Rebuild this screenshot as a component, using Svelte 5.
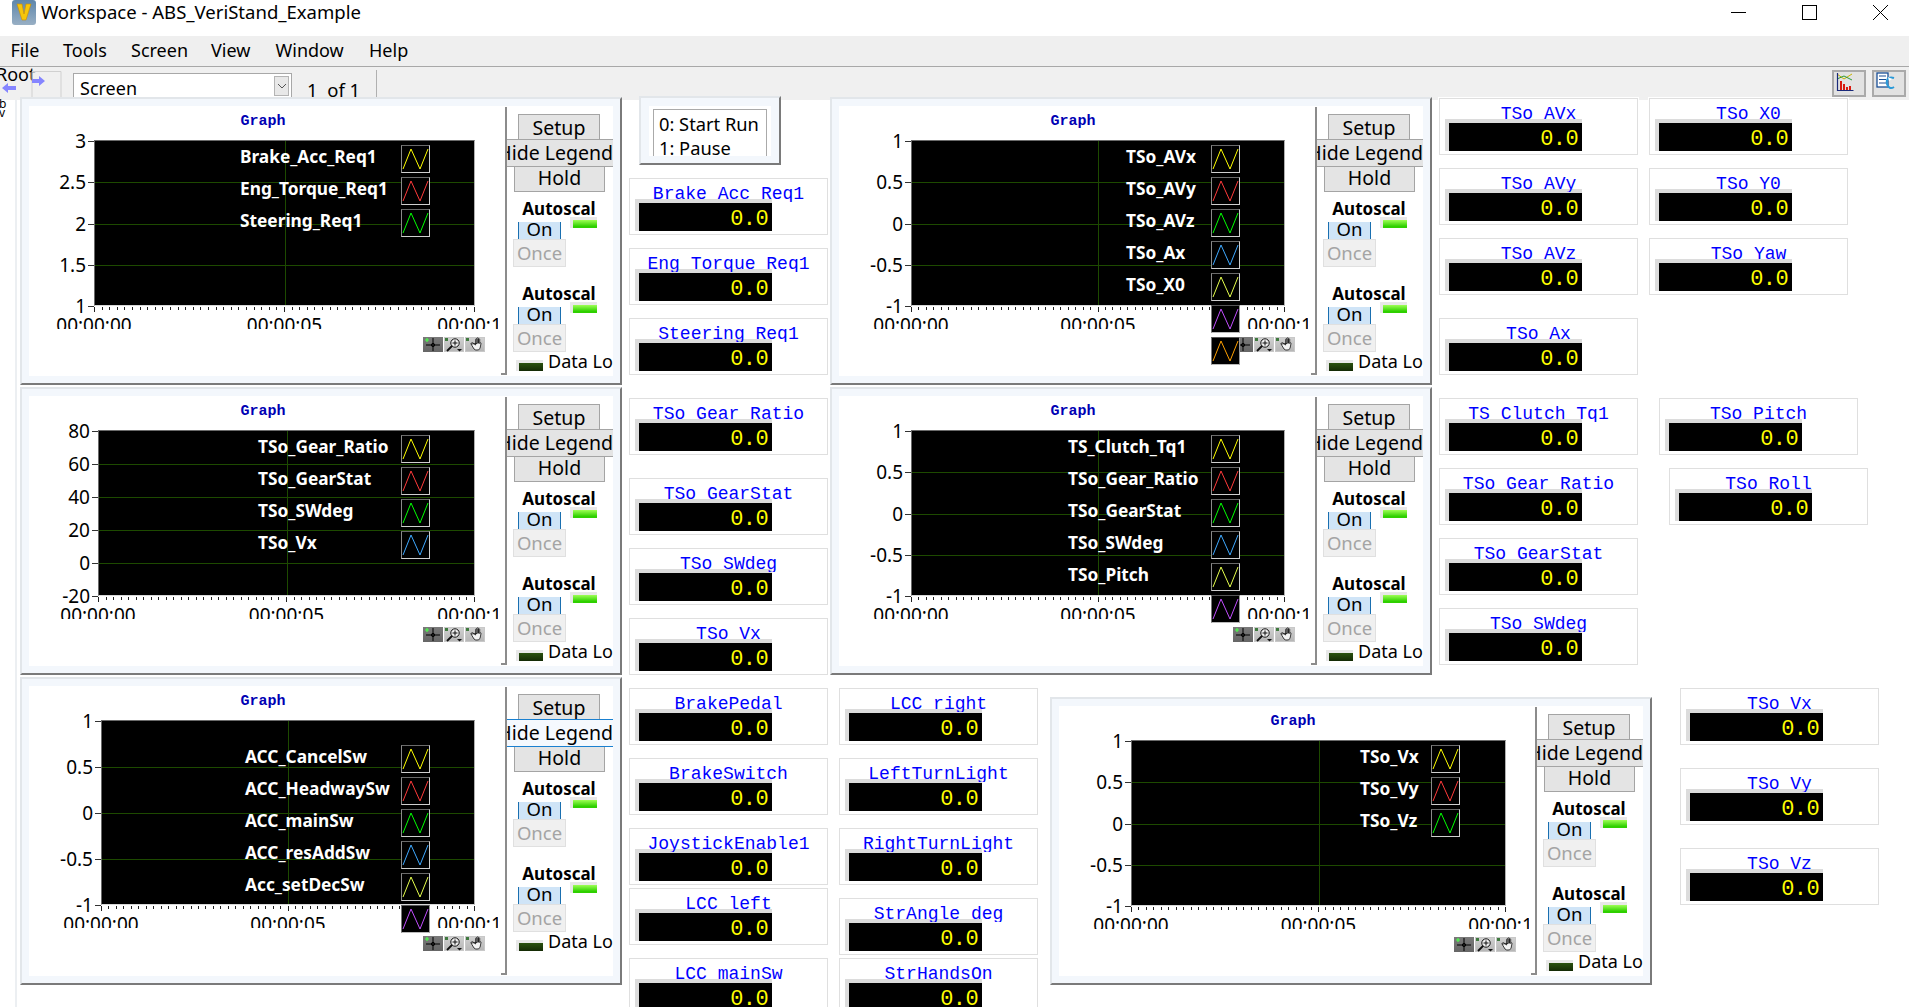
<script>
  const C = { y: '#ffff00', r: '#ff3a3a', g: '#00ff00', b: '#3fa9ff', l: '#e6ff4d', p: '#c24dff', o: '#ffa000' };
  const order = [C.y, C.r, C.g, C.b, C.l, C.p, C.o];
  const graphs = [
    { x: 20, y: 97, left: 65, w: 381, h: 166, ys: ['3','2.5','2','1.5','1'], lx: 211, first: 5, extra: 0, names: ['Brake_Acc_Req1','Eng_Torque_Req1','Steering_Req1'] },
    { x: 20, y: 387, left: 69, w: 377, h: 166, ys: ['80','60','40','20','0','-20'], lx: 229, first: 5, extra: 0, names: ['TSo_Gear_Ratio','TSo_GearStat','TSo_SWdeg','TSo_Vx'] },
    { x: 20, y: 677, left: 72, w: 374, h: 185, ys: ['1','0.5','0','-0.5','-1'], lx: 216, first: 25, extra: 1, active: true, names: ['ACC_CancelSw','ACC_HeadwaySw','ACC_mainSw','ACC_resAddSw','Acc_setDecSw'] },
    { x: 830, y: 97, left: 72, w: 374, h: 166, ys: ['1','0.5','0','-0.5','-1'], lx: 287, first: 5, extra: 2, names: ['TSo_AVx','TSo_AVy','TSo_AVz','TSo_Ax','TSo_X0'] },
    { x: 830, y: 387, left: 72, w: 374, h: 166, ys: ['1','0.5','0','-0.5','-1'], lx: 229, first: 5, extra: 1, names: ['TS_Clutch_Tq1','TSo_Gear_Ratio','TSo_GearStat','TSo_SWdeg','TSo_Pitch'] },
    { x: 1050, y: 697, left: 72, w: 375, h: 166, ys: ['1','0.5','0','-0.5','-1'], lx: 301, first: 5, extra: 0, names: ['TSo_Vx','TSo_Vy','TSo_Vz'] }
  ];
  const ticks = Array.from({ length: 51 }, (_, i) => i);
  const inds = [
    [629,178,'Brake_Acc_Req1'],[629,248,'Eng_Torque_Req1'],[629,318,'Steering_Req1'],[629,398,'TSo_Gear_Ratio'],
    [629,478,'TSo_GearStat'],[629,548,'TSo_SWdeg'],[629,618,'TSo_Vx'],[629,688,'BrakePedal'],[629,758,'BrakeSwitch'],
    [629,828,'JoystickEnable1'],[629,888,'LCC_left'],[629,958,'LCC_mainSw'],
    [839,688,'LCC_right'],[839,758,'LeftTurnLight'],[839,828,'RightTurnLight'],[839,898,'StrAngle_deg'],[839,958,'StrHandsOn'],
    [1439,98,'TSo_AVx'],[1439,168,'TSo_AVy'],[1439,238,'TSo_AVz'],[1439,318,'TSo_Ax'],[1439,398,'TS_Clutch_Tq1'],
    [1439,468,'TSo_Gear_Ratio'],[1439,538,'TSo_GearStat'],[1439,608,'TSo_SWdeg'],
    [1649,98,'TSo_X0'],[1649,168,'TSo_Y0'],[1649,238,'TSo_Yaw'],[1659,398,'TSo_Pitch'],[1669,468,'TSo_Roll'],
    [1680,688,'TSo_Vx'],[1680,768,'TSo_Vy'],[1680,848,'TSo_Vz']
  ];
  const menus = [['File',52.5],['Tools',68],['Screen',80],['View',64.5],['Window',93.5],['Help',60]];
</script>

<div class="shell">
  <header class="title">
    <svg class="appicon" width="24" height="25" viewBox="0 0 24 25">
      <defs><linearGradient id="ag" x1="0" y1="0" x2="0" y2="1"><stop offset="0" stop-color="#5d86ab"/><stop offset="1" stop-color="#98afc4"/></linearGradient></defs>
      <rect x="0" y="0" width="24" height="25" rx="3" fill="url(#ag)"/>
      <path d="M5 4h5l2 10 2-10h5l-5 16h-4z" fill="#f6c60a" stroke="#c98c00" stroke-width=".6"/>
    </svg>
    <span class="ttext">Workspace - ABS_VeriStand_Example</span>
    <div class="winbtns">
      <svg width="15" height="15" viewBox="0 0 15 15"><path d="M0 7.5h15" stroke="#000" stroke-width="1"/></svg>
      <svg width="15" height="15" viewBox="0 0 15 15"><rect x=".5" y=".5" width="14" height="14" fill="none" stroke="#000"/></svg>
      <svg width="15" height="15" viewBox="0 0 15 15"><path d="M0 0l15 15M15 0L0 15" stroke="#000" stroke-width="1"/></svg>
    </div>
  </header>

  <nav class="menu">
    {#each menus as m}
      <span class="mitem" style="width:{m[1]}px">{m[0]}</span>
    {/each}
  </nav>

  <div class="toolbar">
    <div class="nav">
      <span class="root">Root</span>
      <svg class="arrows" width="62" height="30" viewBox="0 0 62 30">
        <path d="M32 0.5H61V30M32 0.5V30" fill="none" stroke="#d0d0d0"/>
        <path d="M2 17l6-5v3h8v4H8v3z" fill="#8585ff"/>
        <path d="M45 10l-6-5v3h-7v4h7v3z" fill="#8585ff"/>
      </svg>
    </div>
    <div class="drop">
      <span>Screen</span>
      <span class="dropbtn"><svg width="10" height="6" viewBox="0 0 10 6"><path d="M1 1l4 4 4-4" fill="none" stroke="#555"/></svg></span>
    </div>
    <span class="pager">1&nbsp;&nbsp;of 1</span>
    <span class="sep"></span>
    <div class="ticons">
      <span class="ticon">
        <svg width="18" height="20" viewBox="0 0 18 20">
          <path d="M1 2l7 5 8-5" fill="none" stroke="#c7b400" stroke-width="1"/>
          <path d="M1 7l7-3 8 4" fill="none" stroke="#2c9a3c" stroke-width="1"/>
          <path d="M1.500 1v17.500h16" fill="none" stroke="#1a2a7a" stroke-width="1.200"/>
          <path d="M4 9h2v9H4zM7 12h2v6H7zM10 15h2v3h-2zM13 14h2v4h-2z" fill="#d81a10"/>
        </svg>
      </span>
      <span class="ticon">
        <svg width="20" height="20" viewBox="0 0 20 20">
          <rect x="1" y="1" width="11" height="14" fill="#fff" stroke="#1a4f96" stroke-width="1.300"/>
          <path d="M3 4h7M3 7.500h7M3 11h7" stroke="#1a4f96" stroke-width="1.100"/>
          <path d="M18 6c-6-2-8 2-7 6s4 5 7 3" fill="none" stroke="#2b9ad8" stroke-width="2"/>
          <path d="M12 5l4 2-3 2z" fill="#fff"/>
        </svg>
      </span>
    </div>
  </div>

  <main class="canvas">
    <div class="edge"></div>
    <div class="stray"><span>b</span><span>v</span></div>

    {#each graphs as g}
      <section class="panel" style="left:{g.x}px;top:{g.y - 100}px">
        <div class="inner" class:tall={g.h > 170}>
          <div class="chart">
            <div class="gtitle">Graph</div>
            <div class="plot" style="margin-left:{g.left}px;width:{g.w}px;height:{g.h}px">
              {#each g.ys as lab, i}
                {@const py = (i * (g.h - 1)) / (g.ys.length - 1)}
                {#if i > 0 && i < g.ys.length - 1}
                  <i class="hline" style="top:{py}px"></i>
                {/if}
                <span class="ylab" style="top:{py}px">{lab}</span>
                <i class="ytick" style="top:{py}px"></i>
              {/each}
              <i class="vline"></i>
            </div>
            <svg class="axis" width={g.left + g.w + 4} height="6">
              {#each ticks as t}
                {@const tx = Math.round(g.left + (t * (g.w - 1)) / 50) + 0.5}
                <line x1={tx} x2={tx} y1="1" y2={t % 25 === 0 ? 6 : 4} stroke="#222" />
              {/each}
            </svg>
            <div class="xlabs" style="width:{g.left + g.w + 23}px">
              <span style="left:{g.left}px">00:00:00</span>
              <span style="left:{g.left + g.w / 2}px">00:00:05</span>
              <span style="left:{g.left + g.w}px">00:00:10</span>
            </div>
            <div class="tools" style="margin-left:{g.left + g.w - 52}px">
              <span class="tool dark">
                <svg width="20" height="15" viewBox="0 0 20 15">
                  <path d="M10 1v13M3 8h14" stroke="#000" stroke-width="1"/>
                  <circle cx="10" cy="8" r="1.600" fill="none" stroke="#000"/>
                  <path d="M4 1v4M2 3h4" stroke="#4dff4d" stroke-width="1.200"/>
                </svg>
              </span>
              <span class="tool">
                <svg width="20" height="15" viewBox="0 0 20 15">
                  <rect x="1" y="1" width="3" height="3" fill="#3f7a3f"/>
                  <circle cx="11" cy="6" r="4.200" fill="#eee" stroke="#111"/>
                  <path d="M11 3.500v5M8.500 6h5" stroke="#111"/>
                  <path d="M8 9l-5 5" stroke="#111" stroke-width="1.800"/>
                  <path d="M13 12h5l-2.500 2.500z" fill="#111"/>
                </svg>
              </span>
              <span class="tool">
                <svg width="20" height="15" viewBox="0 0 20 15">
                  <rect x="1" y="1" width="3" height="3" fill="#3f7a3f"/>
                  <path d="M6 7l3 5c1 1.500 5 1.500 6-.5l1-5c0-1-1-1-1.300 0M14.700 6.500V2.500c0-1-1.300-1-1.300 0v4M13.400 6V1.500c0-1-1.400-1-1.400 0V6.500M12 6.500V2.500c0-1-1.400-1-1.400 0V8L8 6c-1-.8-2.200 0-2 1z" fill="#f4f4f4" stroke="#111" stroke-width=".8"/>
                </svg>
              </span>
            </div>

            <div class="legend" style="top:{34 + g.first}px;left:{g.lx}px;width:{372 + 29 - g.lx}px">
              {#each [...g.names, ...Array(g.extra).fill('')] as name, i}
                <div class="lrow">
                  <span class="lname">{name}</span>
                  <span class="swatch" class:off={!name}>
                    <svg width="27" height="26" viewBox="0 0 27 26">
                      <polyline points="1,23 9,3 18,23 26,3" fill="none" stroke={order[i]} stroke-width="1"/>
                    </svg>
                  </span>
                </div>
              {/each}
            </div>
          </div>

          <div class="ctl">
            <div class="btn setup">Setup</div>
            <div class="btn hide" class:active={g.active}>Hide Legend</div>
            <div class="btn hold">Hold</div>
            {#each [0, 1] as _}
              <div class="auto">
                <div class="atitle">Autoscal</div>
                <div class="arow">
                  <span class="on">On</span>
                  <span class="led"></span>
                </div>
                <div class="once">Once</div>
              </div>
            {/each}
            <div class="datalog">
              <span class="led dim"></span>
              <span class="dtext">Data Lo</span>
            </div>
          </div>
        </div>
      </section>
    {/each}

    <section class="startbox">
      <div class="startinner">
        <div class="starttext">0: Start Run<br />1: Pause</div>
      </div>
    </section>

    {#each inds as n}
      <div class="ind" style="left:{n[0]}px;top:{n[1] - 100}px">
        <div class="ilabel">{#each n[2].split('_') as part, i}{#if i > 0}<span class="us">_</span>{/if}{part}{/each}</div>
        <div class="idisp">0.0</div>
      </div>
    {/each}
  </main>
</div>

<style>
  :global(html), :global(body) { margin: 0; height: 100%; overflow: hidden; background: #fff; }
  .shell {
    width: 1909px; height: 1007px; display: flex; flex-direction: column; overflow: hidden;
    font-family: "Noto Sans", "Open Sans", sans-serif; color: #000; position: relative;
  }
  .title { height: 36px; flex: none; display: flex; align-items: flex-start; background: #fff; position: relative; }
  .appicon { margin-left: 12px; }
  .ttext { margin-left: 5px; font-size: 18.550px; line-height: 23px; }
  .winbtns { margin-left: auto; display: flex; gap: 56px; padding: 5px 21px 0 0; }
  .menu { height: 30px; box-sizing: content-box; flex: none; display: flex; align-items: center; background: #efefef; border-bottom: 1px solid #a8a8a8; padding-left: 10.500px; font-size: 18px; line-height: 28px; }
  .mitem { display: block; margin-top: -2px; }
  .toolbar { height: 33px; flex: none; background: #f0f0f0; display: flex; align-items: flex-start; font-size: 18px; }
  .nav { width: 62px; height: 33px; flex: none; position: relative; }
  .root { position: absolute; left: -4px; top: -5px; line-height: 24px; font-size: 18px; }
  .arrows { position: absolute; left: 0; top: 4px; }
  .drop { margin-left: 11px; margin-top: 6px; width: 219px; height: 30px; box-sizing: border-box; border: 1px solid #a8a8a8; background: #fff; padding-left: 6px; display: flex; justify-content: space-between; line-height: 28px; }
  .dropbtn { width: 15px; height: 20px; margin: 2px 2px 0 0; background: #e8e8e8; border: 1px solid #b4b4b4; display: flex; align-items: center; justify-content: center; box-sizing: border-box; }
  .pager { margin-left: 15px; margin-top: 11px; line-height: 24px; font-size: 18.500px; }
  .sep { width: 1px; height: 30px; background: #b0b0b0; margin: 3px 0 0 16px; }
  .ticons { margin-left: auto; display: flex; gap: 6px; padding: 3px 3px 0 0; }
  .ticon { width: 34px; height: 27px; box-sizing: border-box; border: 2px solid #aaa; background: #e2e2e2; display: flex; justify-content: flex-start; padding-left: 2px; overflow: hidden; }

  .canvas { position: relative; flex: 1; background: #fff; }
  .edge { position: absolute; left: 15px; top: 0; bottom: 0; width: 2px; background: #eceff2; }
  .stray { position: absolute; left: -1px; top: -1px; width: 9px; height: 20px; overflow: hidden; font-size: 12px; line-height: 9px; display: flex; flex-direction: column; }

  .panel {
    position: absolute; width: 602px; box-sizing: border-box; background: #f3f7fc;
    border: 2px solid #e2e6ea; border-right-color: #7a7a7a; border-bottom-color: #7a7a7a;
    padding: 7px 7px 7px 7px;
  }
  .inner { width: 584px; height: 270px; background: #fff; display: flex; }
  .inner.tall { height: 290px; }
  .chart { width: 476px; flex: none; position: relative; }
  .gtitle { height: 29px; padding: 5px 8px 0 0; font: bold 15px/22px "Liberation Mono", monospace; color: #0000b4; text-align: center; }
  .plot { position: relative; box-sizing: border-box; background: #000; border-top: 1px solid #6a6a6a; border-left: 1px solid #6a6a6a; border-right: 1px solid #b0b0b0; border-bottom: 1px solid #d8d8d8; }
  .hline { position: absolute; left: 0; right: 0; height: 1px; background: #1d4a00; }
  .vline { position: absolute; top: 0; bottom: 0; left: 50%; width: 1px; background: #1d4a00; }
  .ylab { position: absolute; right: calc(100% + 9px); transform: translateY(-50%); font-size: 19px; line-height: 24px; white-space: nowrap; }
  .ytick { position: absolute; right: calc(100% + 1px); width: 6px; height: 1px; background: #333; }
  .axis { display: block; }
  .xlabs { position: relative; height: 17px; margin-bottom: 1px; overflow: hidden; font-size: 19px; line-height: 24px; }
  .xlabs span { position: absolute; top: 1px; transform: translateX(-50%); white-space: nowrap; }
  .tools { display: flex; gap: 1px; margin-top: 8px; }
  .tool { width: 20px; height: 15px; display: block; background: linear-gradient(#d2d2d2, #b4b4b4); box-shadow: inset 0 0 0 1px #c8c8c8; }
  .tool.dark { background: linear-gradient(#7a7a7a, #666); box-shadow: none; }
  .tool svg { display: block; }
  .legend { position: absolute; display: flex; flex-direction: column; }
  .lrow { display: flex; justify-content: space-between; height: 32px; }
  .lname { color: #fff; font-weight: 700; font-size: 17.300px; line-height: 24px; white-space: nowrap; }
  .swatch { width: 29px; height: 28px; box-sizing: border-box; background: #000; border: 1px solid #cfcfcf; border-top-color: #6a6a6a; border-left-color: #8a8a8a; display: block; }
  .swatch.off { border-color: #555 #999 #bbb #777; }
  .swatch svg { display: block; }

  .ctl { flex: 1; min-width: 0; border-left: 2px solid #8c8c8c; margin: 1px 0; padding-top: 7px; position: relative; box-sizing: border-box; }
  .ctl::after { content: ""; position: absolute; left: -6px; bottom: 0; width: 4px; height: 2px; background: #8c8c8c; }
  .btn { box-sizing: border-box; display: flex; align-items: center; justify-content: center; white-space: nowrap; overflow: hidden; background: #e4e4e4; border: 1px solid #a4a4a4; font-size: 19.500px; }
  .setup { width: 82px; height: 25px; margin-left: 11px; border-bottom: 0; padding-bottom: 0; }
  .hide { width: 106px; height: 28px; border-left: 0; border-right: 0; justify-content: flex-end; padding: 0 0 2px; }
  .hide.active { background: #f5f9fe; border-color: #1a80d0; }
  .hold { width: 91px; height: 25px; margin: 0 0 5px 7px; border-top: 0; padding-bottom: 3px; }
  .auto { height: 85px; }
  .atitle { height: 25px; width: 104px; text-align: center; font-weight: 700; font-size: 17px; line-height: 24px; }
  .arow { height: 16px; display: flex; align-items: flex-start; padding-left: 11px; }
  .on { width: 43px; height: 17px; box-sizing: border-box; background: #cfe4f7; border-left: 1px solid #1a6fb0; border-right: 1px solid #1a6fb0; text-align: center; font-size: 18.500px; line-height: 14px; overflow: hidden; }
  .led { width: 24px; height: 8px; margin: -5px 0 0 9px; border-top: 3px solid #e8e8e8; border-left: 3px solid #e8e8e8; background: linear-gradient(#9dff55, #2fd000 80%); display: block; flex: none; }
  .once { width: 53px; height: 28px; box-sizing: border-box; margin: 1px 0 0 6px; background: #f0f0f0; border: 1px solid #e0e0e0; color: #a4a4a4; text-align: center; font-size: 18.500px; line-height: 26px; }
  .datalog { position: absolute; left: 0; top: 244px; width: 106px; height: 23px; display: flex; align-items: flex-start; overflow: hidden; }
  .datalog .led { margin: 9px 0 0 9px; }
  .led.dim { background: linear-gradient(#2a5210, #142a05); }
  .dtext { margin-left: 5px; font-size: 18px; line-height: 20px; white-space: nowrap; }

  .startbox { position: absolute; left: 639px; top: -4px; width: 142px; height: 69px; box-sizing: border-box; background: #f3f7fc; border: 2px solid #e2e6ea; border-right-color: #7a7a7a; border-bottom-color: #7a7a7a; padding: 8px 8px 7px 8px; }
  .startinner { background: #fff; height: 100%; padding: 3px 4px 0; box-sizing: border-box; }
  .starttext { box-sizing: border-box; height: 47px; overflow: hidden; border: 1px solid #aaa; border-bottom: 0; padding: 2px 0 0 5px; font-size: 18.300px; line-height: 24px; white-space: nowrap; }

  .ind { position: absolute; width: 199px; height: 57px; box-sizing: border-box; background: #fff; border: 1px solid #dfdfdf; box-shadow: 0 0 0 1px #fff; overflow: hidden; }
  .ilabel { position: relative; z-index: 1; height: 18px; padding-top: 5px; overflow: hidden; text-align: center; font: 18px/21px "Liberation Mono", monospace; color: #0000ff; white-space: nowrap; }
  .us { color: transparent; }
  .idisp { position: relative; width: 129px; height: 28px; margin: -3px 0 0 5px; border-top: 4px solid #dcdcdc; border-left: 4px solid #dcdcdc; background: #000; color: #ffff00; text-align: right; padding-right: 4px; overflow: hidden; font: 22px/34px "Liberation Mono", monospace; letter-spacing: -.6px; }
</style>
